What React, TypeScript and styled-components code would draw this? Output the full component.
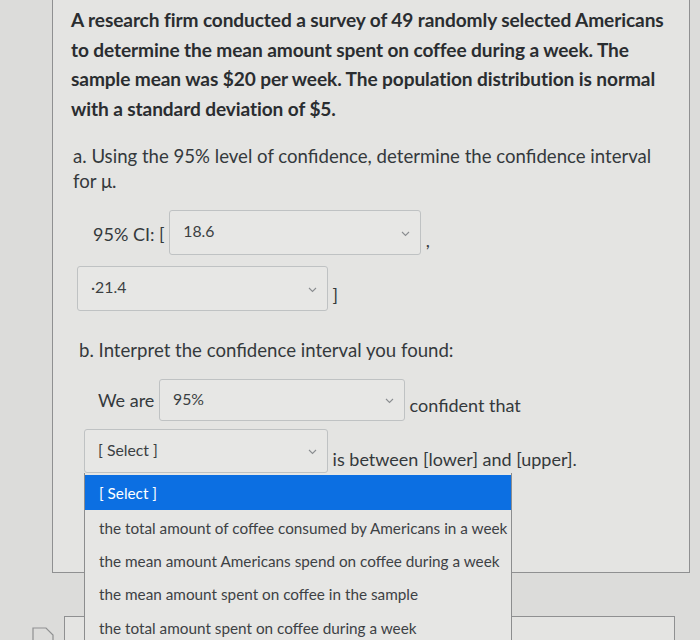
import React from 'react';
import styled, { createGlobalStyle } from 'styled-components';

const GlobalStyle = createGlobalStyle`
    html, body {
        margin: 0;
        padding: 0;
        background: #dcdcda;
        font-family: Lato, "Open Sans", sans-serif;
        color: #2f3437;
    }
`;

const Page = styled.div`
    position: relative;
    height: 640px;
    overflow: hidden;
    padding-left: 52px;
    padding-right: 10px;
    box-sizing: border-box;
`;

const Card = styled.div`
    background: #e4e4e2;
    border: 1px solid #8f9091;
    border-top: none;
    height: 573px;
    box-sizing: border-box;
    padding: 5px 10px 0 18px;
`;

const NextCard = styled.div`
    margin: 43px 15px 0 12px;
    height: 40px;
    background: #e4e4e2;
    border: 1px solid #8f9091;
    border-bottom: none;
`;

const Lead = styled.p`
    margin: 0;
    font-size: 19.1px;
    font-weight: 700;
    line-height: 29.5px;
    color: #2a2d30;
    letter-spacing: -0.1px;
    white-space: nowrap;
`;

const Para = styled.p<{ indent?: number; top: number }>`
    margin: ${p => p.top}px 0 0;
    padding-left: ${p => p.indent || 0}px;
    font-size: 18.6px;
    line-height: 25px;
    color: #34393c;
    white-space: nowrap;
`;

const Row = styled.div<{ indent: number; top: number }>`
    display: flex;
    align-items: center;
    margin-top: ${p => p.top}px;
    padding-left: ${p => p.indent}px;
    font-size: 18px;
    color: #34393c;
`;

const Label = styled.span<{ drop?: number }>`
    padding-top: ${p => p.drop || 0}px;
    white-space: nowrap;
`;

const SelectWrap = styled.div`
    position: relative;
`;

const SelectBox = styled.div<{ w: number; h: number }>`
    width: ${p => p.w}px;
    height: ${p => p.h}px;
    box-sizing: border-box;
    border: 1px solid #bfc2c3;
    border-radius: 3px;
    background: #e7e7e5;
    display: flex;
    align-items: center;
    justify-content: space-between;
    padding: 0 10px 4px 13px;
    font-size: 15.8px;
    color: #3b3f42;
`;

const Chevron = () => (
    <svg width="9" height="6" viewBox="0 0 9 6" style={{ marginTop: 6 }}>
        <path d="M1 1 L4.5 4.5 L8 1" fill="none" stroke="#8a8d90" strokeWidth="1.1" />
    </svg>
);

const Select: React.FC<{ value: string; w: number; h: number }> = ({ value, w, h }) => (
    <SelectBox w={w} h={h}>
        <span>{value}</span>
        <Chevron />
    </SelectBox>
);

const Menu = styled.ul`
    position: absolute;
    left: 0;
    top: 100%;
    width: 426px;
    margin: 0;
    padding: 2px 0 20px;
    list-style: none;
    background: #e6e6e4;
    border-left: 1px solid #8c8d8e;
    border-right: 1px solid #8c8d8e;
    z-index: 2;
`;

const Option = styled.li<{ active?: boolean }>`
    height: ${p => (p.active ? 35 : 33.3)}px;
    display: flex;
    align-items: center;
    padding-left: 14px;
    font-size: 15.3px;
    white-space: nowrap;
    background: ${p => (p.active ? '#0c6fe2' : 'transparent')};
    color: ${p => (p.active ? '#ffffff' : '#3d4144')};
    padding-top: ${p => (p.active ? 0 : 2)}px;
    box-sizing: border-box;
`;

const Flag = styled.svg`
    position: absolute;
    left: 32px;
    top: 627px;
`;

const options = [
    'the total amount of coffee consumed by Americans in a week',
    'the mean amount Americans spend on coffee during a week',
    'the mean amount spent on coffee in the sample',
    'the total amount spent on coffee during a week',
];

const App: React.FC = () => {
    return (
        <>
            <GlobalStyle />
            <Page>
                <Card>
                    <Lead>
                        A research firm conducted a survey of 49 randomly selected Americans<br />
                        to determine the mean amount spent on coffee during a week. The<br />
                        sample mean was $20 per week. The population distribution is normal<br />
                        with a standard deviation of $5.
                    </Lead>
                    <Para indent={2} top={21}>
                        a. Using the 95% level of confidence, determine the confidence interval<br />
                        for &mu;.
                    </Para>
                    <Row indent={22} top={16}>
                        <Label drop={2}>95% CI: [&nbsp;</Label>
                        <Select value="18.6" w={252} h={45} />
                        <Label drop={14}>&nbsp;,</Label>
                    </Row>
                    <Row indent={6} top={11}>
                        <Select value="·21.4" w={251} h={45} />
                        <Label drop={12}>&nbsp;]</Label>
                    </Row>
                    <Para indent={8} top={27}>
                        b. Interpret the confidence interval you found:
                    </Para>
                    <Row indent={27} top={16}>
                        <Label drop={0}>We are&nbsp;</Label>
                        <Select value="95%" w={246} h={42} />
                        <Label drop={10}>&nbsp;confident that</Label>
                    </Row>
                    <Row indent={13} top={8}>
                        <SelectWrap>
                            <Select value="[ Select ]" w={244} h={44} />
                            <Menu>
                                <Option active>[ Select ]</Option>
                                {options.map(o => (
                                    <Option key={o}>{o}</Option>
                                ))}
                            </Menu>
                        </SelectWrap>
                        <Label drop={16}>&nbsp;is between [lower] and [upper].</Label>
                    </Row>
                </Card>
                <NextCard />
                <Flag width="24" height="14" viewBox="0 0 24 14">
                    <path d="M1 14 V1 H14 L21 8 V14" fill="none" stroke="#8f9091" strokeWidth="1.2" />
                </Flag>
            </Page>
        </>
    );
};

export default App;
